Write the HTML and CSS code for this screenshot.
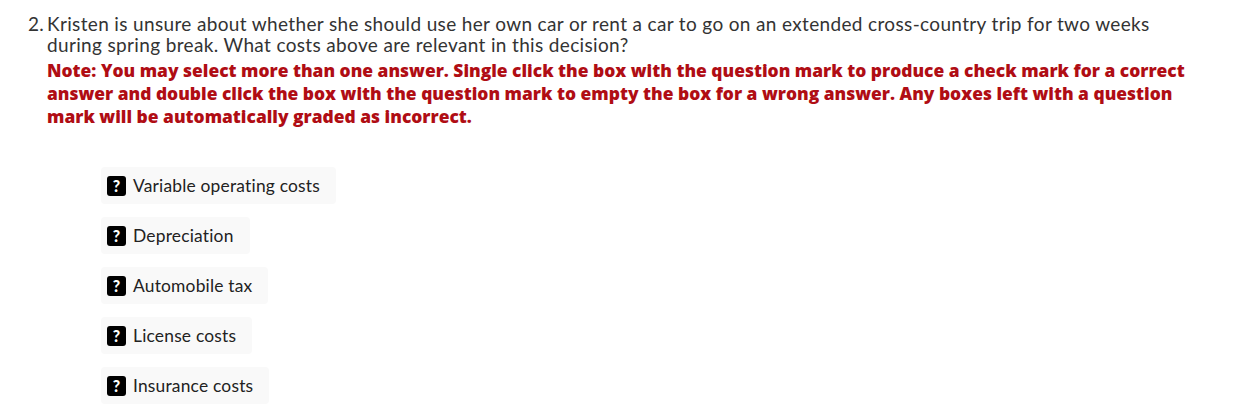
FILE: index.html
```html
<!DOCTYPE html>
<html>
<head>
<meta charset="utf-8">
<link rel="stylesheet" href="styles.css">
</head>
<body>
<div class="question">
  <div class="num">2.</div>
  <div class="body">
    <p class="prompt">Kristen is unsure about whether she should use her own car or rent a car to go on an extended cross-country trip for two weeks during spring break. What costs above are relevant in this decision?</p>
    <p class="note">Note: You may select more than one answer. Single click the box with the question mark to produce a check mark for a correct answer and double click the box with the question mark to empty the box for a wrong answer. Any boxes left with a question mark will be automatically graded as incorrect.</p>
  </div>
</div>
<ul class="options">
  <li class="opt"><span class="qbox">?</span><span>Variable operating costs</span></li>
  <li class="opt"><span class="qbox">?</span><span>Depreciation</span></li>
  <li class="opt"><span class="qbox">?</span><span>Automobile tax</span></li>
  <li class="opt"><span class="qbox">?</span><span>License costs</span></li>
  <li class="opt"><span class="qbox">?</span><span>Insurance costs</span></li>
</ul>
</body>
</html>
```
FILE: styles.css
```css
html, body { margin: 0; padding: 0; background: #fff; }
body {
  font-family: Lato, "Open Sans", sans-serif;
  color: #333;
  padding: 13px 0 0 28px;
}
.question { display: flex; }
.num { width: 19px; font-size: 19px; line-height: 21px; letter-spacing: 0.35px; }
.body { width: 1145px; }
.prompt { margin: 0; font-size: 19px; line-height: 21px; letter-spacing: 0.35px; }
.note {
  margin: 4px 0 0;
  font-family: "Open Sans", Lato, sans-serif;
  color: #b00d14;
  font-weight: 800;
  font-size: 17.4px;
  line-height: 23px;
}
.options {
  list-style: none;
  margin: 39px 0 0 73px;
  padding: 0;
  display: flex;
  flex-direction: column;
  align-items: flex-start;
  gap: 13px;
}
.opt {
  display: flex;
  align-items: center;
  gap: 7px;
  height: 37px;
  padding: 0 16px 0 6px;
  background: #f9f9f9;
  border-radius: 4px;
  font-size: 17.4px;
  letter-spacing: 0.2px;
  color: #222;
}
.qbox {
  width: 19px;
  height: 20px;
  background: #000;
  color: #fff;
  border-radius: 3px;
  font-weight: 900;
  font-size: 16px;
  letter-spacing: 0;
  display: flex;
  align-items: center;
  justify-content: center;
}
```
